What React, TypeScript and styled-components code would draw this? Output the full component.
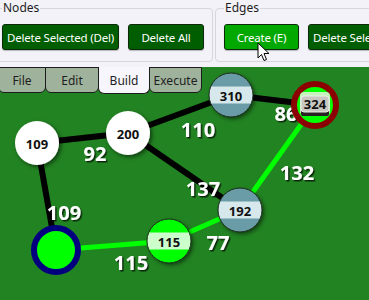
import styled, { createGlobalStyle } from "styled-components";

const GlobalStyle = createGlobalStyle`
  html, body {
    margin: 0;
    padding: 0;
    background: #f2f2f8;
  }
  body {
    font-family: "Noto Sans", "DejaVu Sans", sans-serif;
  }
`;

type NodeKind = "plain" | "visited" | "path" | "target" | "start";

interface INode {
  id: string;
  label: string;
  x: number;
  y: number;
  kind: NodeKind;
}

interface IEdge {
  from: string;
  to: string;
  weight: number;
  onPath: boolean;
  lx: number;
  ly: number;
}

const NODES: INode[] = [
  { id: "a", label: "109", x: 37, y: 143, kind: "plain" },
  { id: "b", label: "200", x: 128, y: 133, kind: "plain" },
  { id: "c", label: "310", x: 231, y: 95, kind: "visited" },
  { id: "d", label: "324", x: 315, y: 105, kind: "target" },
  { id: "e", label: "192", x: 240, y: 210, kind: "visited" },
  { id: "f", label: "115", x: 169, y: 241, kind: "path" },
  { id: "g", label: "", x: 56, y: 250, kind: "start" },
];

const EDGES: IEdge[] = [
  { from: "a", to: "b", weight: 92, onPath: false, lx: 95, ly: 153 },
  { from: "b", to: "c", weight: 110, onPath: false, lx: 198, ly: 129 },
  { from: "c", to: "d", weight: 86, onPath: false, lx: 286, ly: 113 },
  { from: "b", to: "e", weight: 137, onPath: false, lx: 203, ly: 188 },
  { from: "a", to: "g", weight: 109, onPath: false, lx: 64, ly: 212 },
  { from: "d", to: "e", weight: 132, onPath: true, lx: 297, ly: 172 },
  { from: "e", to: "f", weight: 77, onPath: true, lx: 218, ly: 242 },
  { from: "f", to: "g", weight: 115, onPath: true, lx: 131, ly: 262 },
];

const TABS = [
  { name: "File", width: 48 },
  { name: "Edit", width: 54 },
  { name: "Build", width: 52 },
  { name: "Execute", width: 53 },
];

const byId = (id: string) => NODES.find((n) => n.id === id)!;

const GraphNode = ({ node }: { node: INode }) => {
  const { x, y, label, kind } = node;
  const clip = `clip-${node.id}`;

  if (kind === "plain") {
    return (
      <g>
        <circle cx={x} cy={y} r={22} fill="#fff" filter="url(#nodeShadow)" />
        <NodeText x={x} y={y + 1}>{label}</NodeText>
      </g>
    );
  }

  if (kind === "start") {
    return (
      <circle cx={x} cy={y} r={22} fill="#00ff00" stroke="#00007f" strokeWidth={6} />
    );
  }

  if (kind === "target") {
    return (
      <g>
        <circle cx={x} cy={y} r={21} fill="#00ff00" stroke="#8b0000" strokeWidth={6} />
        <rect x={x - 15} y={y - 13} width={30} height={23} rx={4} fill="#c4f4bc" />
        <rect x={x - 14} y={y + 4} width={28} height={7} rx={2} fill="#2a2222" />
        <rect x={x - 14} y={y - 9} width={28} height={16} rx={3} fill="#c8c8c0" stroke="#eeeeea" strokeWidth={1} />
        <NodeText x={x} y={y - 1}>{label}</NodeText>
      </g>
    );
  }

  const fill = kind === "visited" ? "#699ca6" : "#00ff00";
  const band = kind === "visited" ? "#d6e8ec" : "#ccffcc";

  return (
    <g>
      <clipPath id={clip}>
        <circle cx={x} cy={y} r={22} />
      </clipPath>
      <circle cx={x} cy={y} r={22} fill={fill} filter="url(#nodeShadow)" />
      <rect x={x - 23} y={y - 8.5} width={46} height={17} fill={band} clipPath={`url(#${clip})`} />
      <circle cx={x} cy={y} r={22} fill="none" stroke="#1b2a1b" strokeWidth={1} />
      <NodeText x={x} y={y + 1}>{label}</NodeText>
    </g>
  );
};

const Cursor = () => (
  <CursorMark width="14" height="21" viewBox="0 0 14 21">
    <path
      d="M1 1 L1 16 L4.5 12.5 L7 18.5 L9.5 17.5 L7 11.5 L12 11.5 Z"
      fill="#fff"
      stroke="#000"
      strokeWidth="1"
      strokeLinejoin="round"
    />
  </CursorMark>
);

const App = () => {
  return (
    <>
      <GlobalStyle />
      <Screen>
        <Toolbar>
          <Group $width={219}>
            <Legend>Nodes</Legend>
            <ButtonRow>
              <ActionButton $width={117}>Delete Selected (Del)</ActionButton>
              <ActionButton $width={76}>Delete All</ActionButton>
            </ButtonRow>
          </Group>
          <Group $width={200}>
            <Legend>Edges</Legend>
            <ButtonRow>
              <ActionButton $width={75} $active>
                Create (E)
              </ActionButton>
              <ActionButton $width={117}>Delete Selected (Del)</ActionButton>
            </ButtonRow>
          </Group>
          <Cursor />
        </Toolbar>
        <Workspace>
          <TabBar>
            {TABS.map((t) => (
              <Tab key={t.name} $width={t.width} $selected={t.name === "Build"}>
                {t.name}
              </Tab>
            ))}
          </TabBar>
          <Canvas viewBox="0 67 369 233">
            <defs>
              <filter id="nodeShadow" x="-50%" y="-50%" width="200%" height="200%">
                <feDropShadow dx="2" dy="2" stdDeviation="2" floodColor="#000" floodOpacity="0.55" />
              </filter>
              <filter id="textShadow" x="-30%" y="-30%" width="160%" height="160%">
                <feDropShadow dx="1.5" dy="1.5" stdDeviation="0.7" floodColor="#000" floodOpacity="0.7" />
              </filter>
            </defs>
            {EDGES.map((e) => {
              const a = byId(e.from);
              const b = byId(e.to);
              return (
                <line
                  key={`${e.from}-${e.to}`}
                  x1={a.x}
                  y1={a.y}
                  x2={b.x}
                  y2={b.y}
                  stroke={e.onPath ? "#00ff00" : "#000"}
                  strokeWidth={e.onPath ? 5 : 6}
                />
              );
            })}
            {EDGES.map((e) => (
              <WeightText key={`w-${e.from}-${e.to}`} x={e.lx} y={e.ly} filter="url(#textShadow)">
                {e.weight}
              </WeightText>
            ))}
            {NODES.map((n) => (
              <GraphNode key={n.id} node={n} />
            ))}
          </Canvas>
        </Workspace>
      </Screen>
    </>
  );
};

const Screen = styled.div`
  width: 369px;
  height: 300px;
  overflow: hidden;
  display: flex;
  flex-direction: column;
`;

const Toolbar = styled.div`
  position: relative;
  height: 67px;
  flex: none;
  display: flex;
  gap: 2px;
  margin-left: -7px;
  background: #f2f2f8;
`;

const Group = styled.fieldset<{ $width: number }>`
  box-sizing: border-box;
  flex: none;
  width: ${(p) => p.$width}px;
  height: 62px;
  margin: 0;
  padding: 8px 8px 0 8px;
  border: 1px solid #d6d6de;
  border-radius: 4px;
`;

const Legend = styled.legend`
  padding: 0 1px;
  font-size: 12px;
  line-height: 16px;
  color: #1e1e1e;
`;

const ButtonRow = styled.div`
  display: flex;
  gap: 9px;
`;

const ActionButton = styled.button<{ $width: number; $active?: boolean }>`
  flex: none;
  box-sizing: border-box;
  width: ${(p) => p.$width}px;
  height: 26px;
  padding: 0;
  border: 1px solid #0c2a0c;
  border-radius: 3px;
  background: ${(p) => (p.$active ? "#00a800" : "#005e00")};
  color: #fff;
  font-family: "Noto Sans", "DejaVu Sans", sans-serif;
  font-size: 11.5px;
  letter-spacing: -0.2px;
  white-space: nowrap;
  overflow: hidden;
  box-shadow: 0 1px 1px rgba(0, 0, 0, 0.25);
`;

const CursorMark = styled.svg`
  position: absolute;
  left: 264px;
  top: 42px;
`;

const Workspace = styled.div`
  position: relative;
  flex: 1;
  background: #228322;
`;

const TabBar = styled.div`
  position: relative;
  z-index: 1;
  display: flex;
  margin-left: -2px;
  height: 27px;
  align-items: flex-start;
`;

const Tab = styled.div<{ $width: number; $selected: boolean }>`
  box-sizing: border-box;
  flex: none;
  width: ${(p) => p.$width}px;
  height: ${(p) => (p.$selected ? 27 : 26)}px;
  margin-right: -1px;
  padding-top: 1px;
  display: flex;
  align-items: center;
  justify-content: center;
  border: 1px solid #1c1c1c;
  border-top: ${(p) => (p.$selected ? "none" : "1px solid #1c1c1c")};
  border-radius: 0 0 6px 6px;
  background: ${(p) => (p.$selected ? "#f6f6fc" : "#9fb29c")};
  color: #1e1e1e;
  font-size: 12px;
`;

const Canvas = styled.svg`
  position: absolute;
  inset: 0;
  width: 369px;
  height: 233px;
`;

const NodeText = styled.text`
  font-family: "Noto Sans", "DejaVu Sans", sans-serif;
  font-weight: 700;
  font-size: 13px;
  fill: #111;
  text-anchor: middle;
  dominant-baseline: central;
`;

const WeightText = styled.text`
  font-family: "Noto Sans", "DejaVu Sans", sans-serif;
  font-weight: 700;
  font-size: 20px;
  fill: #fff;
  text-anchor: middle;
  dominant-baseline: central;
`;

export default App;
